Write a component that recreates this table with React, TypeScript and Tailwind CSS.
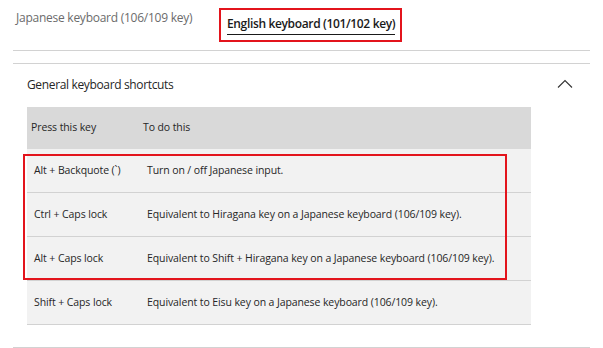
const rows = [
    { key: 'Alt + Backquote (`)', action: 'Turn on / off Japanese input.' },
    { key: 'Ctrl + Caps lock', action: 'Equivalent to Hiragana key on a Japanese keyboard (106/109 key).' },
    { key: 'Alt + Caps lock', action: 'Equivalent to Shift + Hiragana key on a Japanese keyboard (106/109 key).' },
    { key: 'Shift + Caps lock', action: 'Equivalent to Eisu key on a Japanese keyboard (106/109 key).' },
];

export default function App() {
    return (
        <div className="w-[603px] h-[348px] bg-white overflow-hidden text-[#262626] font-['Open_Sans','Noto_Sans',sans-serif]">
            {/* tabs */}
            <div className="mx-[13px] h-[51px] border-b border-[#d2d2d2] flex items-start pt-[8px]">
                <div className="pl-[3px] pt-[1px] text-[12px] tracking-[-0.25px] text-[#6b6b6b] w-[206px] whitespace-nowrap">Japanese keyboard (106/109 key)</div>
                <div className="w-[183px] h-[34px] border-2 border-[#e3141c] pl-[6px] whitespace-nowrap">
                    <span className="inline-block text-[12px] tracking-[-0.35px] font-semibold text-[#1a1a1a] border-b border-[#1a1a1a] pb-[3px] leading-[15px]">
                        English keyboard (101/102 key)
                    </span>
                </div>
            </div>

            <div className="mx-[13px] mt-[12px] border-t border-[#d2d2d2]">
                <div className="h-[43px] flex items-center justify-between pl-[14px] pr-[17px]">
                    <span className="text-[12px] tracking-[-0.35px] mb-[2px]">General keyboard shortcuts</span>
                    <svg width="16" height="10" viewBox="0 0 16 10" className="text-[#333] mb-[4px]">
                        <polyline points="1,8.5 8,1.5 15,8.5" fill="none" stroke="currentColor" strokeWidth="1.1" />
                    </svg>
                </div>

                <div className="relative ml-[14px] w-[504px] text-[10.5px] tracking-[-0.1px]">
                    <div className="h-[42px] bg-[#d9d9d9] flex items-center">
                        <div className="w-[116px] pl-[4px]">Press this key</div>
                        <div>To do this</div>
                    </div>
                    {rows.map((row) => (
                        <div key={row.key} className="h-[44px] bg-[#f2f2f2] border-b border-[#d2d2d2] flex items-center first:border-t">
                            <div className="w-[120px] pl-[7px]">{row.key}</div>
                            <div>{row.action}</div>
                        </div>
                    ))}
                    <div className="absolute left-[-4px] top-[47px] w-[484px] h-[126px] border-2 border-[#e3141c]" />
                </div>

                <div className="mt-[22px] h-[2px] bg-[#d2d2d2]" />
            </div>
        </div>
    );
}
